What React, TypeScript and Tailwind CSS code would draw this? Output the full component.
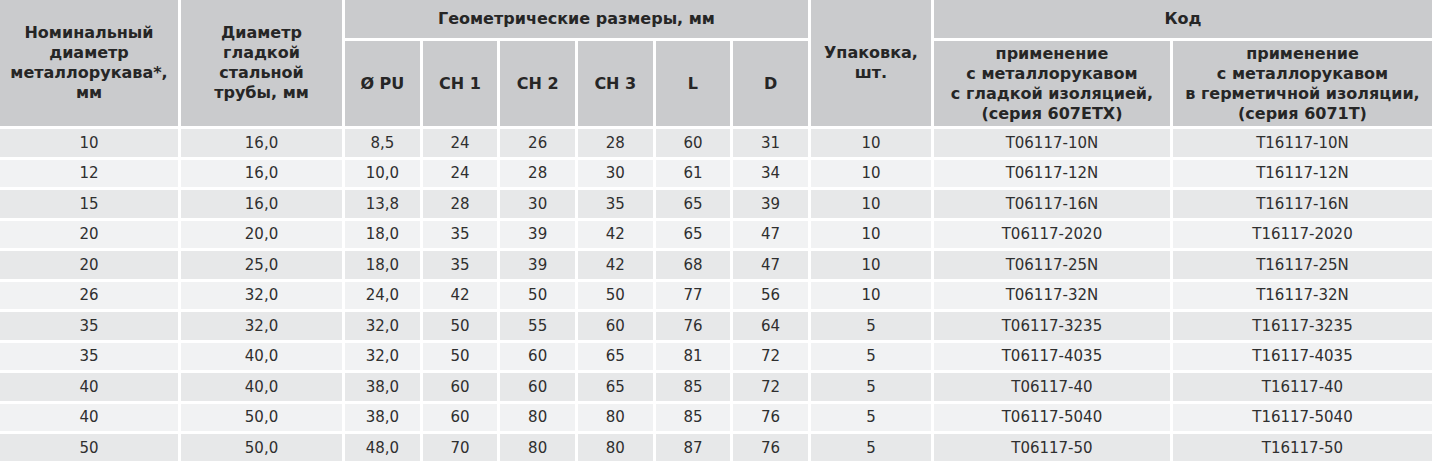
const rows: string[][] = [
  ["10", "16,0", "8,5", "24", "26", "28", "60", "31", "10", "T06117-10N", "T16117-10N"],
  ["12", "16,0", "10,0", "24", "28", "30", "61", "34", "10", "T06117-12N", "T16117-12N"],
  ["15", "16,0", "13,8", "28", "30", "35", "65", "39", "10", "T06117-16N", "T16117-16N"],
  ["20", "20,0", "18,0", "35", "39", "42", "65", "47", "10", "T06117-2020", "T16117-2020"],
  ["20", "25,0", "18,0", "35", "39", "42", "68", "47", "10", "T06117-25N", "T16117-25N"],
  ["26", "32,0", "24,0", "42", "50", "50", "77", "56", "10", "T06117-32N", "T16117-32N"],
  ["35", "32,0", "32,0", "50", "55", "60", "76", "64", "5", "T06117-3235", "T16117-3235"],
  ["35", "40,0", "32,0", "50", "60", "65", "81", "72", "5", "T06117-4035", "T16117-4035"],
  ["40", "40,0", "38,0", "60", "60", "65", "85", "72", "5", "T06117-40", "T16117-40"],
  ["40", "50,0", "38,0", "60", "80", "80", "85", "76", "5", "T06117-5040", "T16117-5040"],
  ["50", "50,0", "48,0", "70", "80", "80", "87", "76", "5", "T06117-50", "T16117-50"],
];

const geo = ["Ø PU", "CH 1", "CH 2", "CH 3", "L", "D"];

function Head({ className = "", children }: { className?: string; children: React.ReactNode }) {
  return (
    <div
      className={`flex items-center justify-center bg-[#cacbcd] text-center text-[16px] font-bold leading-[20px] text-[#262626] ${className}`}
    >
      <div>{children}</div>
    </div>
  );
}

export default function App() {
  return (
    <div className="w-[1432px] bg-white font-['DejaVu_Sans',Verdana,sans-serif]">
      <div className="grid grid-cols-[178px_161px_repeat(6,74.67px)_120px_236px_1fr] grid-rows-[38px_85px_repeat(11,27.5px)] gap-[3px]">
        <Head className="row-span-2">
          Номинальный
          <br />
          диаметр
          <br />
          металлорукава*,
          <br />
          мм
        </Head>
        <Head className="row-span-2">
          Диаметр
          <br />
          гладкой
          <br />
          стальной
          <br />
          трубы, мм
        </Head>
        <Head className="col-span-6">Геометрические размеры, мм</Head>
        <Head className="row-span-2">
          Упаковка,
          <br />
          шт.
        </Head>
        <Head className="col-span-2">Код</Head>
        {geo.map((g) => (
          <Head key={g}>{g}</Head>
        ))}
        <Head>
          применение
          <br />
          с металлорукавом
          <br />
          с гладкой изоляцией,
          <br />
          (серия 607ETX)
        </Head>
        <Head>
          применение
          <br />
          с металлорукавом
          <br />
          в герметичной изоляции,
          <br />
          (серия 6071T)
        </Head>
        {rows.map((r, i) =>
          r.map((v, j) => (
            <div
              key={`${i}-${j}`}
              className={`flex items-center justify-center text-[15px] text-[#2f2f2f] ${
                i % 2 === 0 ? "bg-[#e7e8e9]" : "bg-[#f1f2f3]"
              }`}
            >
              {v}
            </div>
          ))
        )}
      </div>
    </div>
  );
}
